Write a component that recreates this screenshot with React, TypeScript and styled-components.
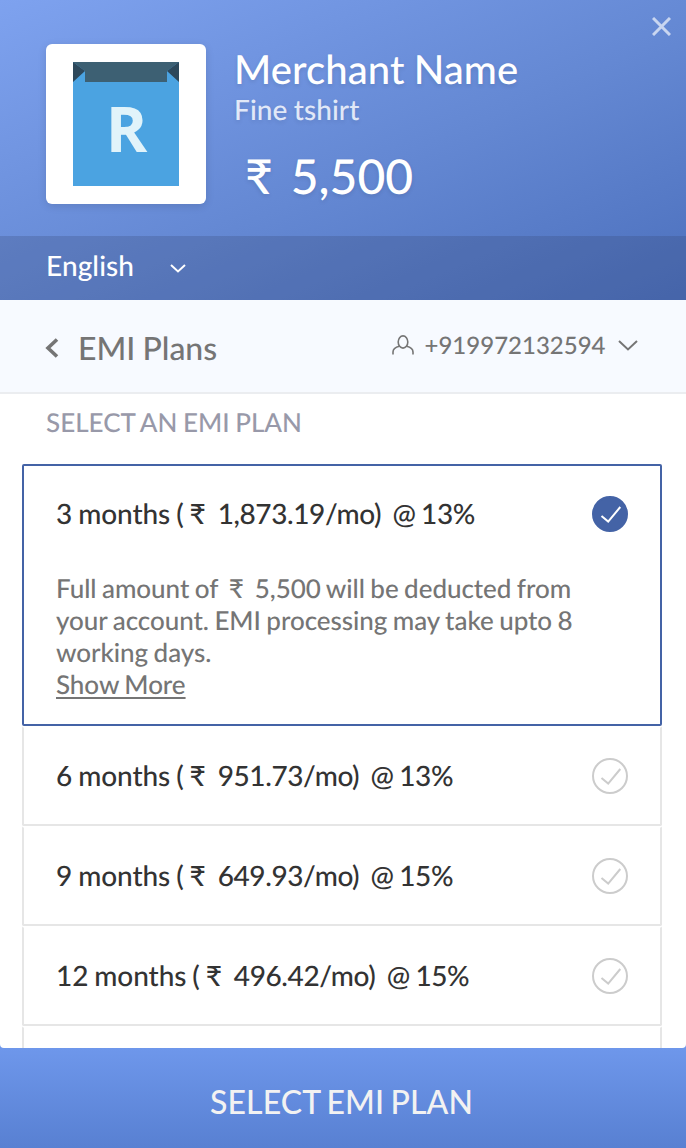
import React from 'react';
import styled, { createGlobalStyle, css } from 'styled-components';

const GlobalStyle = createGlobalStyle`
  *, *::before, *::after { box-sizing: border-box; }
  body {
    margin: 0;
    font-family: Lato, 'Noto Sans', sans-serif;
    font-weight: 500;
    background: #fff;
    color: #333;
    text-rendering: geometricPrecision;
  }
  button { font: inherit; border: 0; background: none; padding: 0; cursor: pointer; }
`;

const Checkout = styled.div`
  width: 686px;
  height: 1148px;
  display: flex;
  flex-direction: column;
  overflow: hidden;
  background: #6e97eb;
  word-spacing: -0.063em;
`;

const Top = styled.header`
  flex: none;
  height: 300px;
  display: flex;
  flex-direction: column;
  color: #fff;
  background: linear-gradient(to bottom right, #7ea2ef 0%, #6488d3 55%, #4c70bd 100%);
`;

const Merchant = styled.div`
  position: relative;
  height: 236px;
  padding: 44px 46px 0;
  display: flex;
  gap: 28px;
`;

const LogoCard = styled.div`
  flex: none;
  width: 160px;
  height: 160px;
  border-radius: 6px;
  background: #fff;
  display: flex;
  justify-content: center;
  padding-top: 18px;
  box-shadow: 0 2px 8px rgba(0, 0, 0, 0.12);
`;

const Bag = styled.div`
  position: relative;
  width: 106px;
  height: 124px;
  display: flex;
  justify-content: center;
`;

const BagShape = styled.svg`
  position: absolute;
  inset: 0;
`;

const BagLetter = styled.span`
  position: relative;
  margin-top: 32px;
  padding-left: 1px;
  font: 700 63px/70px 'Open Sans', sans-serif;
  color: #e1f3fa;
`;

const Details = styled.div`
  display: flex;
  flex-direction: column;
  text-shadow: 0 2px 4px rgba(0, 0, 0, 0.1);
`;

const Name = styled.h1`
  margin: 1px 0 0;
  font-size: 40px;
  font-weight: 500;
  line-height: 48px;
  letter-spacing: 0.08px;
`;

const Item = styled.p`
  margin: 0;
  font-size: 28px;
  line-height: 32px;
  letter-spacing: 0.1px;
  opacity: 0.8;
`;

const Amount = styled.div`
  margin-top: 22px;
  padding-left: 11px;
  display: flex;
  gap: 18px;
  font-size: 48px;
  line-height: 60px;
`;

const Close = styled.button`
  position: absolute;
  top: 17px;
  right: 15px;
  width: 19px;
  height: 19px;
  display: flex;
`;

const Language = styled.div`
  height: 64px;
  padding-left: 46px;
  display: flex;
  align-items: center;
  gap: 36px;
  font-size: 28px;
  line-height: 60px;
  letter-spacing: 0.1px;
  background: rgba(50, 68, 112, 0.25);
  span { margin-top: -6px; }
`;

const Nav = styled.nav`
  flex: none;
  height: 94px;
  padding: 0 48px 0 45px;
  display: flex;
  align-items: center;
  background: #f7faff;
  border-bottom: 2px solid #ebedf0;
  color: #757575;
`;

const BackIcon = styled.svg`
  margin-top: 4px;
`;

const Title = styled.h2`
  margin: 4px 0 0 19px;
  font-size: 32px;
  font-weight: 500;
  line-height: 40px;
`;

const User = styled.div`
  margin-left: auto;
  margin-top: -2px;
  display: flex;
  align-items: center;
  font-size: 24px;
  line-height: 32px;
`;

const Phone = styled.span`
  margin: 2px 12.5px 0 11px;
`;

const Body = styled.main`
  flex: 1;
  min-height: 0;
  overflow: hidden;
  padding: 0 24px 0 22px;
  background: #fff;
  border-radius: 0 0 4px 4px;
`;

const SectionLabel = styled.h3`
  margin: 12px 0 25px;
  padding-left: 24px;
  font-size: 26px;
  font-weight: 500;
  line-height: 33px;
  color: #9899a9;
`;

const PlanCard = styled.section<{ $selected?: boolean }>`
  border: 2px solid #e6e6e6;
  border-top-color: transparent;
  border-radius: 2px;
  padding: 0 32px;
  height: 100px;
  ${({ $selected }) => $selected && css`
    height: 262px;
    border-color: #4463a6;
  `}
`;

const PlanRow = styled.div`
  height: 96px;
  display: flex;
  align-items: center;
  justify-content: space-between;
  font-size: 28px;
  line-height: 36px;
`;

const PlanText = styled.span`
  white-space: pre;
  margin-top: -2px;
  letter-spacing: -0.08px;
`;

const Monthly = styled.span`
  letter-spacing: -0.4px;
`;

const Note = styled.p`
  margin: 10px 0 0;
  font-size: 26px;
  line-height: 32px;
  letter-spacing: -0.055px;
  color: #757575;
  white-space: pre;
`;

const More = styled.a`
  text-decoration: underline;
  text-decoration-thickness: 2px;
  text-underline-offset: 3px;
  text-decoration-skip-ink: none;
`;

const Footer = styled.button`
  && {
    flex: none;
    height: 100px;
    padding: 7px 3px 0 0;
    font-size: 32px;
    letter-spacing: 0.12px;
    word-spacing: -0.063em;
    color: #f2f2f2;
    background: linear-gradient(#6e97eb, #5880d2);
  }
`;

const Chevron = ({ w, h, stroke = 2 }: { w: number; h: number; stroke?: number }) => (
  <svg width={w} height={h} viewBox={`0 0 ${w} ${h}`} fill="none" stroke="currentColor" strokeWidth={stroke}>
    <path d={`M1 1L${w / 2} ${h - 1.6}L${w - 1} 1`} />
  </svg>
);

const Check = ({ on }: { on?: boolean }) => (
  <svg width="36" height="36" viewBox="0 0 36 36" fill="none">
    <circle cx="18" cy="18" r="17" fill={on ? '#4463a6' : 'none'} stroke={on ? '#4463a6' : '#ccc'} strokeWidth="2" />
    <path d="M9.5 20L16.2 25.6L28.3 11" stroke={on ? '#fff' : '#ccc'} strokeWidth="2" />
  </svg>
);

const plans = [
  { months: 3, amount: '1,873.19', rate: 13 },
  { months: 6, amount: '951.73', rate: 13 },
  { months: 9, amount: '649.93', rate: 15 },
  { months: 12, amount: '496.42', rate: 15 },
];

export default function App() {
  return (
    <>
      <GlobalStyle />
      <Checkout>
        <Top>
          <Merchant>
            <LogoCard>
              <Bag>
                <BagShape width="106" height="124" viewBox="0 0 106 124">
                  <path fill="#4ba3e1" d="M0 0h106v124H0z" />
                  <path fill="#3d6073" d="M0 0h106L94 9v11H12V9z" />
                  <path fill="#2d485b" d="M0 0L12 9L0 20zM106 0L94 9L106 20z" />
                </BagShape>
                <BagLetter>R</BagLetter>
              </Bag>
            </LogoCard>
            <Details>
              <Name>Merchant Name</Name>
              <Item>Fine tshirt</Item>
              <Amount><span>₹</span><span>5,500</span></Amount>
            </Details>
            <Close aria-label="Close">
              <svg width="19" height="19" viewBox="0 0 19 19" stroke="#fff" strokeOpacity=".65" strokeWidth="3">
                <path d="M1 1L18 18M18 1L1 18" />
              </svg>
            </Close>
          </Merchant>
          <Language>
            <span>English</span>
            <Chevron w={16} h={9} />
          </Language>
        </Top>
        <Nav>
          <BackIcon width="14" height="20" viewBox="0 0 14 20" fill="none" stroke="currentColor" strokeWidth="3.6">
            <path d="M12 1.5L3 10L12 18.5" />
          </BackIcon>
          <Title>EMI Plans</Title>
          <User>
            <svg width="22" height="20" viewBox="0 0 22 20" fill="none" stroke="currentColor" strokeWidth="1.6">
              <ellipse cx="11" cy="7" rx="4.8" ry="6.1" />
              <path d="M1 19.5V17C1 13.5 3 12.2 7.4 11.2M21 19.5V17C21 13.5 19 12.2 14.6 11.2" />
            </svg>
            <Phone>+919972132594</Phone>
            <Chevron w={20} h={11} />
          </User>
        </Nav>
        <Body>
          <SectionLabel>SELECT AN EMI PLAN</SectionLabel>
          {plans.map((p, i) => (
            <PlanCard key={p.months} $selected={i === 0}>
              <PlanRow>
                <PlanText>
                  {`${p.months} months ( ₹  `}
                  <Monthly>{`${p.amount}/mo)  @ ${p.rate}%`}</Monthly>
                </PlanText>
                <Check on={i === 0} />
              </PlanRow>
              {i === 0 && (
                <Note>
                  {'Full amount of  ₹  5,500 will be deducted from\nyour account. EMI processing may take upto 8\nworking days.\n'}
                  <More>Show More</More>
                </Note>
              )}
            </PlanCard>
          ))}
          <PlanCard />
        </Body>
        <Footer>SELECT EMI PLAN</Footer>
      </Checkout>
    </>
  );
}
